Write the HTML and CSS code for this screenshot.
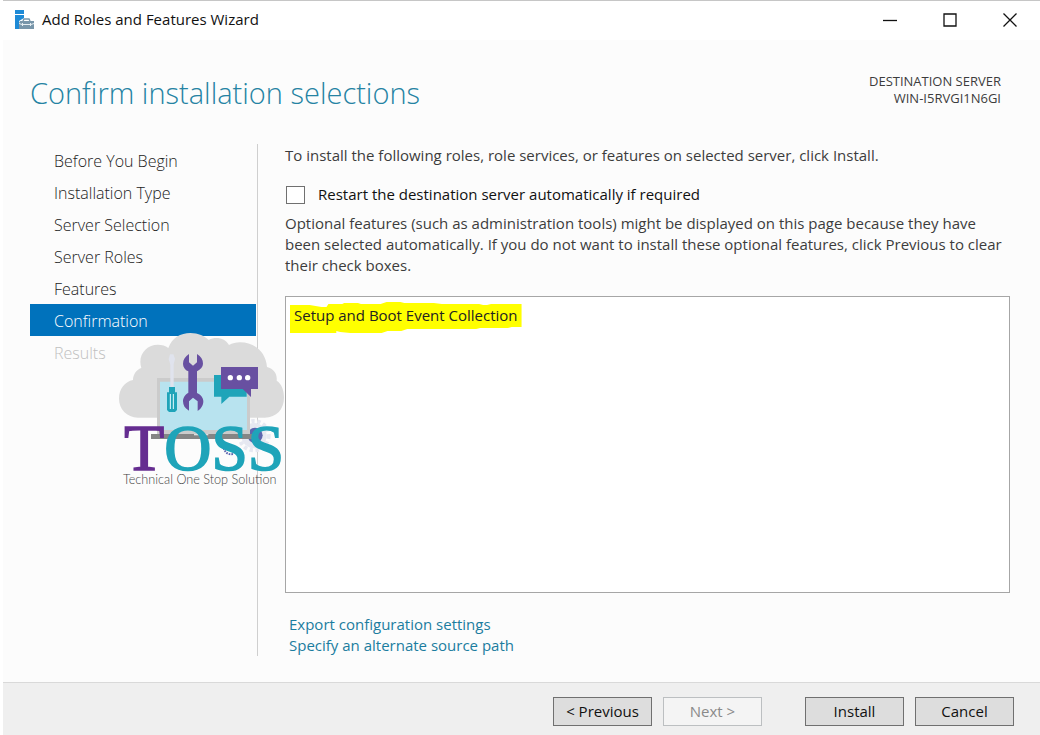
FILE: index.html
```html
<!DOCTYPE html>
<html lang="en">
<head>
<meta charset="utf-8">
<title>Add Roles and Features Wizard</title>
<link rel="stylesheet" href="styles.css">
</head>
<body>
<div class="window">
  <header class="titlebar">
    <svg class="app-icon" viewBox="0 0 19 20" aria-hidden="true">
      <path fill="#1e8ad6" d="M0 0h9v4H0zM0 5h9v3L4 11v8H0z"/>
      <path fill="#7896aa" d="M5 11h14v8H4v-6z"/>
      <path fill="none" stroke="#7896aa" stroke-width="1.500" d="M8 11l1-2h5l1 2"/>
      <path fill="none" stroke="#e6eef2" d="M4 13.500l3 1h9l3-1M7.500 13v3M15.500 13v3"/>
    </svg>
    <span class="titlebar-text">Add Roles and Features Wizard</span>
    <div class="window-controls">
      <button type="button" aria-label="Minimize"><svg viewBox="0 0 14 14"><path d="M0 7.500h14"/></svg></button>
      <button type="button" aria-label="Maximize"><svg viewBox="0 0 14 14"><path d="M1 1h12v12H1z"/></svg></button>
      <button type="button" aria-label="Close"><svg viewBox="0 0 14 14"><path d="M.5.5l13 13M13.500.5l-13 13"/></svg></button>
    </div>
  </header>

  <main class="page">
    <div class="page-head">
      <h1>Confirm installation selections</h1>
      <div class="destination">DESTINATION SERVER<br>WIN-I5RVGI1N6GI</div>
    </div>
    <div class="columns">
      <nav class="steps">
        <a href="#">Before You Begin</a>
        <a href="#">Installation Type</a>
        <a href="#">Server Selection</a>
        <a href="#">Server Roles</a>
        <a href="#">Features</a>
        <a href="#" class="current" aria-current="step">Confirmation</a>
        <a class="disabled" aria-disabled="true">Results</a>
      </nav>
      <section class="details">
        <p class="intro">To install the following roles, role services, or features on selected server, click Install.</p>
        <div class="restart">
          <input type="checkbox" id="restart">
          <label for="restart">Restart the destination server automatically if required</label>
        </div>
        <p class="note">Optional features (such as administration tools) might be displayed on this page because they have been selected automatically. If you do not want to install these optional features, click Previous to clear their check boxes.</p>
        <div class="selection">
          <div class="marked">
            <svg class="marker" viewBox="0 0 235 33" preserveAspectRatio="none" aria-hidden="true">
              <path fill="#ff0" d="M0 4h20l12 2h5l2-3h14l2-1h14l3 1h20l6-2h14l4 1h30l8 1h38l4 1h4l4-1h31v23h-10l-4 1h-28l-4 1h-70l-6 2h-14l-6 2h-32l-10-1-4-1v2H0z"/>
            </svg>
            <span>Setup and Boot Event Collection</span>
          </div>
        </div>
        <div class="links">
          <a href="#">Export configuration settings</a>
          <a href="#">Specify an alternate source path</a>
        </div>
      </section>
    </div>

    <svg class="logo" viewBox="0 0 555 510" role="img" aria-label="TOSS Technical One Stop Solution">
      <path fill="#dbdbdb" d="M84 278C50 276 27 252 27 221c0-30 18-51 42-56 0-16 9-30 25-36-12-38 14-70 50-70 12 0 22 3 31 10C186 38 212 24 241 24c24 0 43 9 55 21 22-12 50-5 61 15 10-5 21-8 33-8 44 0 78 30 81 74 21 6 31 20 29 41 15 10 22 28 22 51 0 34-22 59-58 60z"/>
      <circle cx="432" cy="332" r="38" fill="#e6e8f1"/>
      <circle cx="432" cy="332" r="44" fill="none" stroke="#e6e8f1" stroke-width="12" stroke-dasharray="10 8"/>
      <circle cx="435" cy="331" r="23" fill="#5d65ae"/>
      <path fill="none" stroke="#5d65ae" stroke-width="6" stroke-dasharray="5 3" d="M341 369c5 18 18 20 29 18"/>
      <path fill="#cbcbcb" d="M141 159h279v168H141z"/>
      <path fill="#b8e3ef" d="M150 170h261v145H150z"/>
      <path fill="#858585" d="M123 327h313v15H123z"/>
      <path fill="#dedede" d="M252 327h43v4h-43z"/>
      <path fill="#e0e3ed" d="M180 88h10l5 13-4 17v68h-10v-68l-5-15z"/>
      <path fill="#1fa4b9" d="M177 186h18v16h6v53l-6 6h-18l-6-6v-53h6z"/>
      <path stroke="#e8fbff" stroke-width="3" d="M181 207v45M190 207v45"/>
      <path fill="#6850a1" d="M237 87v25l12 10 12-10V87c12 7 18 17 18 29 0 9-7 17-18 23v65c12 5 19 15 19 25 0 12-7 23-17 29v-29l-14-11-12 11v28c-12-6-18-16-18-28 0-11 7-21 16-26v-64c-10-4-16-13-16-23 0-12 7-22 18-29z"/>
      <path fill="#1fa4b9" d="M312 150h98v65h-52l-24 22v-22h-22z"/>
      <path fill="#6850a1" d="M333 126h111v66h-21v24l-25-24h-65z"/>
      <g fill="#fff"><circle cx="361" cy="158" r="8"/><circle cx="388" cy="158" r="8"/><circle cx="413" cy="158" r="8"/></g>
      <text class="logo-name" x="43" y="436"><tspan class="logo-t">T</tspan><tspan class="logo-oss">OSS</tspan></text>
      <text class="logo-tagline" x="39" y="477">Technical One Stop Solution</text>
    </svg>
  </main>

  <footer class="actions">
    <button type="button">&lt; Previous</button>
    <button type="button" disabled>Next &gt;</button>
    <button type="button" class="group-start">Install</button>
    <button type="button">Cancel</button>
  </footer>
</div>
</body>
</html>
```

FILE: styles.css
```css
* { box-sizing: border-box; }

body {
  margin: 0;
  background: #fff;
  color: #3c3c3c;
  font: 15px/21px "Open Sans", "Noto Sans", sans-serif;
}

h1, p { margin: 0; }
a { text-decoration: none; }
button { font: inherit; }

.window {
  display: flex;
  flex-direction: column;
  min-height: 100vh;
  margin-left: 3px;
  border-top: 1px solid #c6c6c6;
}

.titlebar {
  display: flex;
  align-items: center;
  height: 39px;
  padding: 0 0 2px 12px;
  background: #fff;
  color: #111;
}

.app-icon { width: 19px; height: 20px; }
.titlebar-text { margin-left: 8px; }
.window-controls { display: flex; margin-left: auto; }

.window-controls button {
  display: grid;
  place-items: center;
  width: 60px;
  height: 36px;
  padding: 0;
  border: 0;
  background: none;
}

.window-controls svg {
  width: 14px;
  height: 14px;
  fill: none;
  stroke: #111;
  stroke-width: 1.300;
}

.page {
  position: relative;
  display: flex;
  flex: 1;
  flex-direction: column;
  padding: 32px 30px 26px 27px;
  background: #fcfcfc;
}

.page-head {
  display: flex;
  justify-content: space-between;
  height: 72px;
}

h1 {
  color: #2583a3;
  font-size: 29px;
  font-weight: 300;
  line-height: 42px;
}

.destination {
  padding: 1px 9px 0 0;
  font-size: 13px;
  line-height: 17px;
  text-align: right;
}

.columns { display: flex; flex: 1; }

.steps {
  display: flex;
  flex-direction: column;
  width: 228px;
  padding-right: 1px;
  border-right: 1px solid #cfcfcf;
  font-size: 16px;
  font-weight: 300;
}

.steps a {
  padding: 2px 0 0 24px;
  color: #222;
  line-height: 30px;
}

.steps .current { background: #0072bc; color: #fff; }
.steps .disabled { color: #c0c0c0; }

.details {
  display: flex;
  flex: 1;
  flex-direction: column;
  padding: 1px 0 0 27px;
}

.restart {
  display: flex;
  align-items: center;
  gap: 13px;
  margin: 18px 0 8px;
  color: #111;
}

.restart input {
  appearance: none;
  width: 19px;
  height: 18px;
  margin: 0 0 0 1px;
  border: 1px solid #707070;
  background: #fff;
}

.selection {
  flex: 1;
  margin-top: 20px;
  padding: 4px;
  border: 1px solid #a6a6a6;
  background: #fff;
  color: #222;
}

.marked {
  position: relative;
  display: inline-block;
  padding: 4px;
}

.marked span { position: relative; }

.marker {
  position: absolute;
  top: 0;
  left: 0;
  width: 100%;
  height: 33px;
}

.links {
  display: flex;
  flex-direction: column;
  align-items: flex-start;
  margin-top: 21px;
  padding-left: 4px;
}

.links a { color: #1b7d9f; }

.logo {
  position: absolute;
  top: 285px;
  left: 107px;
  width: 185px;
  height: 170px;
}

.logo-name {
  font-family: "Liberation Serif", serif;
  font-size: 196px;
  stroke-width: 5px;
}

.logo-t { fill: #652d90; stroke: #652d90; }
.logo-oss { fill: #1fa4b9; stroke: #1fa4b9; }

.logo-tagline {
  fill: #444;
  font-family: Lato, sans-serif;
  font-size: 38px;
  font-weight: 300;
}

.actions {
  display: flex;
  justify-content: flex-end;
  gap: 11px;
  padding: 14px 26px 9px;
  border-top: 1px solid #d9d9d9;
  background: #efefef;
}

.actions button {
  width: 99px;
  height: 29px;
  padding: 0;
  border: 1px solid #707070;
  background: #ddd;
  color: #111;
}

.actions button:disabled {
  border-color: #bcbfc1;
  background: #f4f4f4;
  color: #8a8a8a;
}

.actions .group-start { margin-left: 32px; }
```
